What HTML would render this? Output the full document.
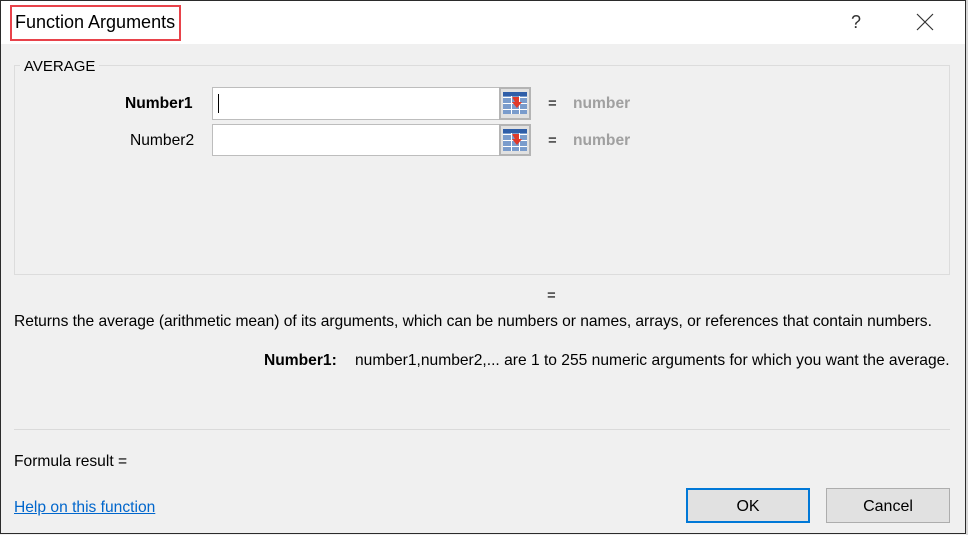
<!DOCTYPE html>
<html><head><style>
*{margin:0;padding:0;box-sizing:border-box}
body{width:968px;height:535px;background:#f0f0f0;font-family:"Liberation Sans",sans-serif;color:#000;position:relative;overflow:hidden}
.frame{position:absolute;left:0;top:0;width:966px;height:534px;border:1px solid #2b2b2b;background:#f0f0f0}
.ext{position:absolute;left:966px;top:0;width:2px;height:535px;background:#d8d8d8}
.title{position:absolute;left:1px;top:1px;width:964px;height:43px;background:#fff}
.t{position:absolute;font-size:15.6px;white-space:nowrap}
.box{position:absolute;border:1px solid #bdbdbd;background:#fff}
.btnr{position:absolute;width:32px;height:32px;border:2px solid #b4b4b4;background:#e1e1e1}
</style></head><body>
<div class="frame"></div>
<div class="ext"></div>
<div class="title"></div>
<div style="position:absolute;left:10px;top:5px;width:171px;height:36px;border:2px solid #e8424a"></div>
<div class="t" style="left:15px;top:12px;font-size:18px">Function Arguments</div>
<div class="t" style="left:851px;top:12px;font-size:18px;color:#333">?</div>
<svg style="position:absolute;left:916px;top:13px" width="18" height="18"><path d="M1 1L17 17M17 1L1 17" stroke="#333" stroke-width="1.2"/></svg>

<div style="position:absolute;left:14px;top:65px;width:936px;height:210px;border:1px solid #dcdcdc"></div>
<div class="t" style="left:20px;top:58px;background:#f0f0f0;padding:0 4px;font-size:15px">AVERAGE</div>

<div class="t" style="left:125px;top:95px;font-weight:bold">Number1</div>
<div class="box" style="left:212px;top:87px;width:288px;height:33px"><div style="position:absolute;left:5px;top:6px;width:1px;height:19px;background:#000"></div></div>
<div class="btnr" style="left:499px;top:87px;height:33px"></div>
<svg style="position:absolute;left:503px;top:92px" width="24" height="22"><rect x="0" y="0" width="24" height="22" fill="#7a9ccc"/><g stroke="#fff" stroke-width="1"><path d="M0 5.5H24M0 11.5H24M0 17.5H24M8.5 0V22M16.5 0V22"/></g><rect x="0" y="0" width="24" height="4" fill="#2f5ea8"/><path d="M9 5h7v5h3l-5 6-5-6h3z" fill="#e03a2a"/></svg>
<div class="t" style="left:548px;top:95px;font-size:15px">=</div>
<div class="t" style="left:573px;top:95px;color:#a0a0a0;font-weight:bold">number</div>

<div class="t" style="left:130px;top:132px">Number2</div>
<div class="box" style="left:212px;top:124px;width:288px;height:32px"></div>
<div class="btnr" style="left:499px;top:124px"></div>
<svg style="position:absolute;left:503px;top:129px" width="24" height="22"><rect x="0" y="0" width="24" height="22" fill="#7a9ccc"/><g stroke="#fff" stroke-width="1"><path d="M0 5.5H24M0 11.5H24M0 17.5H24M8.5 0V22M16.5 0V22"/></g><rect x="0" y="0" width="24" height="4" fill="#2f5ea8"/><path d="M9 5h7v5h3l-5 6-5-6h3z" fill="#e03a2a"/></svg>
<div class="t" style="left:548px;top:132px;font-size:15px">=</div>
<div class="t" style="left:573px;top:132px;color:#a0a0a0;font-weight:bold">number</div>

<div class="t" style="left:547px;top:287px;font-size:15px">=</div>
<div class="t" style="left:14px;top:313px;letter-spacing:-0.04px">Returns the average (arithmetic mean) of its arguments, which can be numbers or names, arrays, or references that contain numbers.</div>
<div class="t" style="left:264px;top:352px;font-weight:bold">Number1:</div>
<div class="t" style="left:355px;top:352px">number1,number2,... are 1 to 255 numeric arguments for which you want the average.</div>

<div style="position:absolute;left:14px;top:429px;width:936px;height:1px;background:#dadada"></div>
<div class="t" style="left:14px;top:453px">Formula result =</div>
<div class="t" style="left:14px;top:499px;color:#0066cc;text-decoration:underline">Help on this function</div>

<div style="position:absolute;left:686px;top:488px;width:124px;height:35px;border:2px solid #0078d7;background:#e1e1e1;font-size:16px;text-align:center;line-height:33px">OK</div>
<div style="position:absolute;left:826px;top:488px;width:124px;height:35px;border:1px solid #adadad;background:#e1e1e1;font-size:16px;text-align:center;line-height:35px">Cancel</div>
</body></html>
